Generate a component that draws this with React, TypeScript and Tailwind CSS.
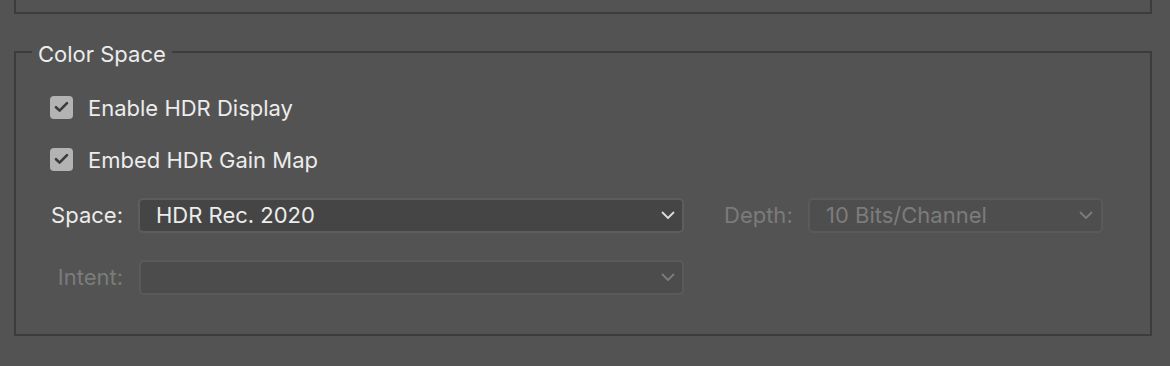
import React from 'react';

function Check({ label }: { label: string }) {
  return (
    <div className="flex items-center h-[24px]">
      <div className="w-[23px] h-[23px] rounded-[4px] bg-[#b3b3b3] flex items-center justify-center">
        <svg width="15" height="12" viewBox="0 0 15 12" fill="none">
          <path d="M2 6.2 L5.6 9.6 L13 2.2" stroke="#3b3b3b" strokeWidth="2.6" strokeLinecap="round" strokeLinejoin="round" />
        </svg>
      </div>
      <span className="ml-[15px] mt-[2px] text-[22px] leading-[24px] text-[#ececec]">{label}</span>
    </div>
  );
}

function Chevron({ color }: { color: string }) {
  return (
    <svg width="14" height="9" viewBox="0 0 14 9" fill="none">
      <path d="M1.5 1.5 L7 7 L12.5 1.5" stroke={color} strokeWidth="1.8" strokeLinecap="round" strokeLinejoin="round" />
    </svg>
  );
}

export default function App() {
  return (
    <div
      className="w-[1170px] h-[366px] bg-[#535353] overflow-hidden"
      style={{ fontFamily: 'Inter, "Liberation Sans", sans-serif' }}
    >
      {/* bottom edge of the section above */}
      <div className="ml-[14px] w-[1138px] h-[14px] border-x-2 border-b-2 border-[#3c3c3c]" />

      {/* Color Space group */}
      <div className="relative mt-[37px] ml-[14px] w-[1138px] h-[285px] border-2 border-[#3c3c3c]">
        <div className="absolute left-[16px] top-[-13px] px-[6px] bg-[#535353] text-[22px] leading-[28px] text-[#ececec]">
          Color Space
        </div>

        <div className="pt-[42px] pl-[34px] flex flex-col gap-[28px]">
          <Check label="Enable HDR Display" />
          <Check label="Embed HDR Gain Map" />
        </div>

        <div className="mt-[27px] flex items-center">
          <span className="w-[107px] text-right text-[22px] text-[#ececec]">Space:</span>
          <div className="ml-[15px] w-[546px] h-[35px] rounded-[5px] border-2 border-[#5d5d5d] bg-[#454545] flex items-center justify-between pl-[16px] pr-[7px]">
            <span className="text-[22px] text-[#ececec]">HDR Rec. 2020</span>
            <Chevron color="#dcdcdc" />
          </div>
          <span className="ml-[40px] w-[68px] text-right text-[22px] text-[#7b7b7b]">Depth:</span>
          <div className="ml-[16px] w-[295px] h-[35px] rounded-[5px] border-2 border-[#5a5a5a] bg-[#4e4e4e] flex items-center justify-between pl-[16px] pr-[8px]">
            <span className="text-[22px] text-[#7c7c7c]">10 Bits/Channel</span>
            <Chevron color="#7c7c7c" />
          </div>
        </div>

        <div className="mt-[27px] flex items-center">
          <span className="w-[107px] text-right text-[22px] text-[#7b7b7b]">Intent:</span>
          <div className="ml-[16px] w-[545px] h-[35px] rounded-[5px] border-2 border-[#5a5a5a] bg-[#4c4c4c] flex items-center justify-end pr-[7px]">
            <Chevron color="#7c7c7c" />
          </div>
        </div>
      </div>
    </div>
  );
}
